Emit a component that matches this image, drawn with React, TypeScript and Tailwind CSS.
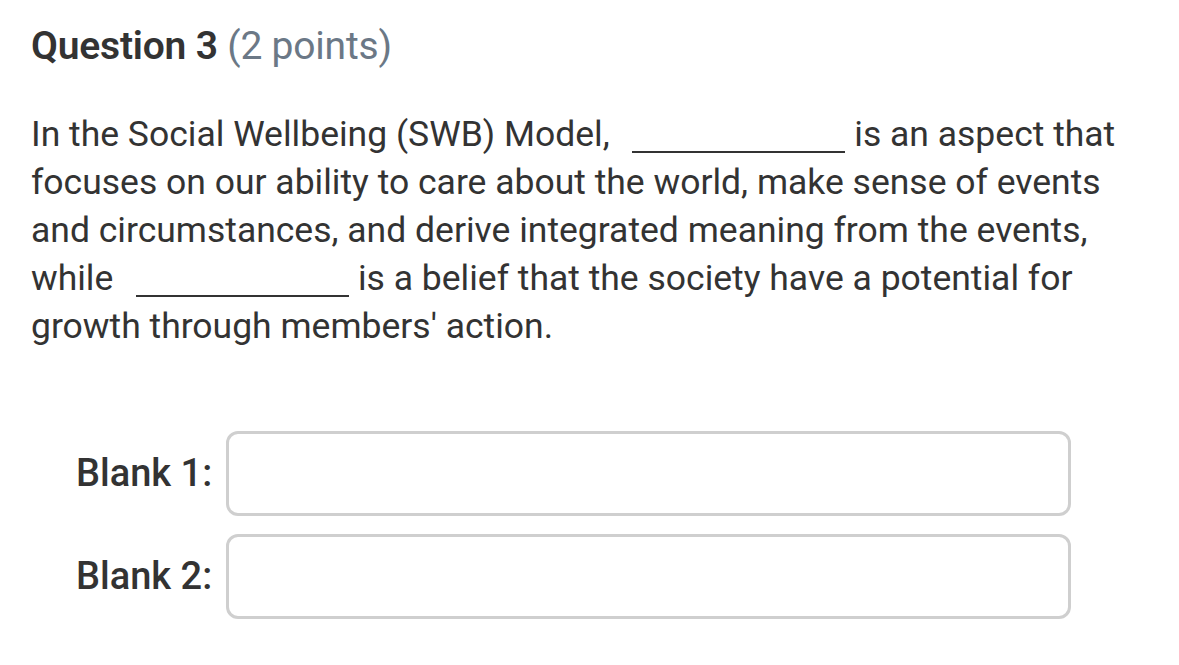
export default function App() {
  const blank = "inline-block w-[213px] h-[2px] bg-[#333] ml-[14px] align-[-7px]";

  return (
    <div className="min-h-[665px] w-[1179px] bg-white px-[31px] pt-[22px] text-[#333] font-['Roboto',sans-serif]">
      {/* Question header */}
      <h2 className="text-[39px] leading-[48px] font-semibold tracking-[-0.2px]">
        Question 3 <span className="font-normal text-[#6b7886]">(2 points)</span>
      </h2>

      {/* Prompt */}
      <p className="mt-[40px] text-[35.5px] leading-[48px]">
        In the Social Wellbeing (SWB) Model, <span className={blank} /> is an aspect that focuses on
        our ability to care about the world, make sense of events and circumstances, and derive
        integrated meaning from the events, while <span className={blank} /> is a belief that the
        society have a potential for growth through members' action.
      </p>

      {/* Answer fields */}
      <div className="mt-[81px] flex flex-col gap-[18px] pl-[45px]">
        {[1, 2].map((n) => (
          <div key={n} className="flex items-center gap-[12px]">
            <label className="w-[138px] text-[38px] font-medium whitespace-nowrap">Blank {n}:</label>
            <input
              type="text"
              className="h-[85px] w-[845px] rounded-[12px] border-[3px] border-[#cfcfcf] bg-white px-4 text-[32px] outline-none"
            />
          </div>
        ))}
      </div>
    </div>
  );
}
